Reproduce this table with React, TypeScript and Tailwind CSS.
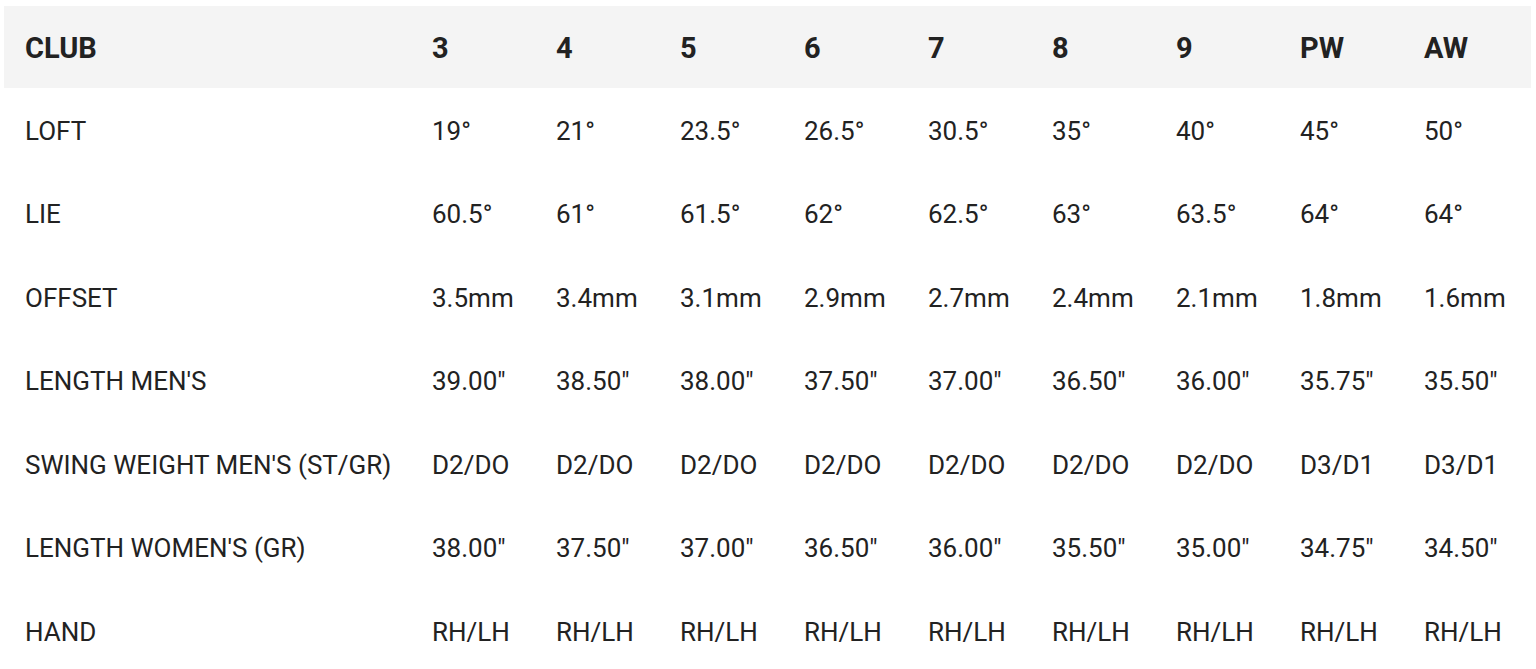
import React from "react";

const cols = ["3", "4", "5", "6", "7", "8", "9", "PW", "AW"];
const rows: [string, string[]][] = [
  ["LOFT", ["19°", "21°", "23.5°", "26.5°", "30.5°", "35°", "40°", "45°", "50°"]],
  ["LIE", ["60.5°", "61°", "61.5°", "62°", "62.5°", "63°", "63.5°", "64°", "64°"]],
  ["OFFSET", ["3.5mm", "3.4mm", "3.1mm", "2.9mm", "2.7mm", "2.4mm", "2.1mm", "1.8mm", "1.6mm"]],
  ["LENGTH MEN'S", ['39.00"', '38.50"', '38.00"', '37.50"', '37.00"', '36.50"', '36.00"', '35.75"', '35.50"']],
  ["SWING WEIGHT MEN'S (ST/GR)", ["D2/DO", "D2/DO", "D2/DO", "D2/DO", "D2/DO", "D2/DO", "D2/DO", "D3/D1", "D3/D1"]],
  ["LENGTH WOMEN'S (GR)", ['38.00"', '37.50"', '37.00"', '36.50"', '36.00"', '35.50"', '35.00"', '34.75"', '34.50"']],
  ["HAND", ["RH/LH", "RH/LH", "RH/LH", "RH/LH", "RH/LH", "RH/LH", "RH/LH", "RH/LH", "RH/LH"]],
];

export default function App() {
  return (
    <div className="w-[1536px] h-[669px] bg-white pl-[4px] pt-[6px] text-[#222222] font-['Roboto',sans-serif] overflow-hidden">
      <div className="w-[1527px]">
        <div className="grid grid-cols-[428px_repeat(8,124px)_1fr] h-[82px] items-center bg-[#f4f4f4] text-[29px] font-bold leading-none pt-[2px]">
          <div className="pl-[21px]">CLUB</div>
          {cols.map((c) => (
            <div key={c}>{c}</div>
          ))}
        </div>
        {rows.map(([label, vals]) => (
          <div key={label} className="grid grid-cols-[428px_repeat(8,124px)_1fr] h-[83.5px] items-center text-[26px] leading-none pt-[2px]">
            <div className="pl-[21px] whitespace-nowrap">{label}</div>
            {vals.map((v, i) => (
              <div key={i} className="whitespace-nowrap">{v}</div>
            ))}
          </div>
        ))}
      </div>
    </div>
  );
}
